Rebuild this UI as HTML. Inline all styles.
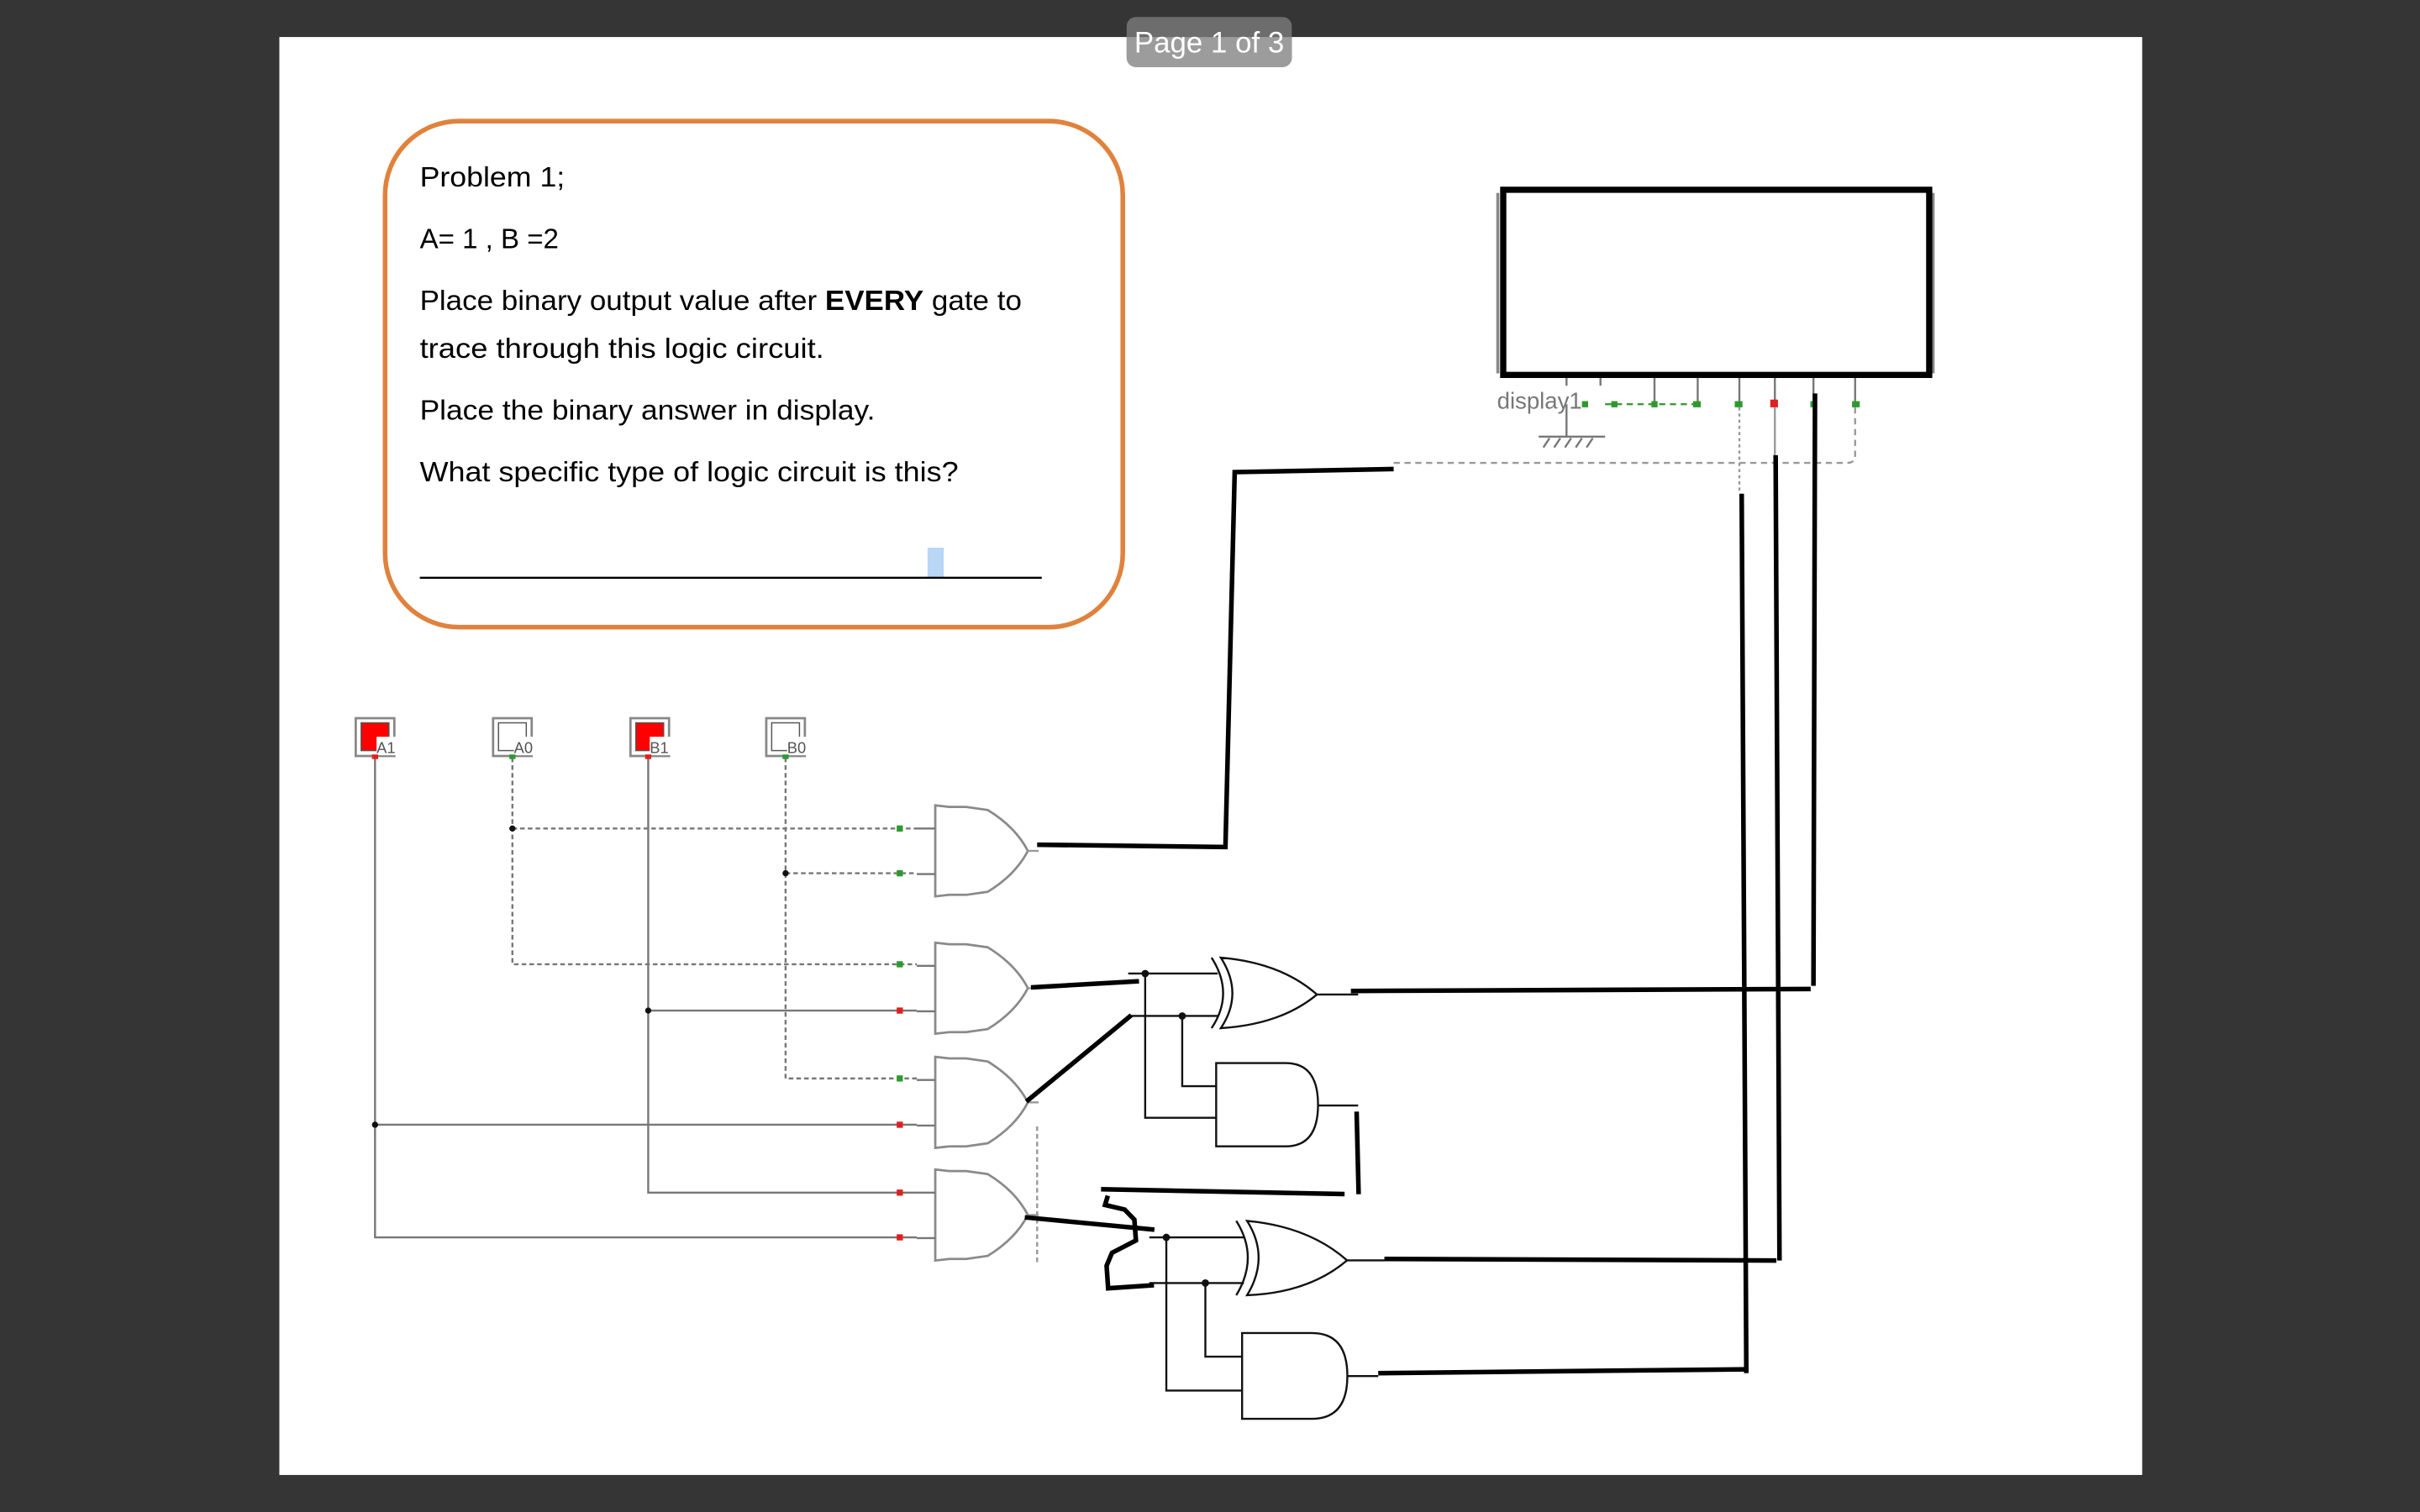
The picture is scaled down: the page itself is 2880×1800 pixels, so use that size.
<!DOCTYPE html>
<html><head><meta charset="utf-8"><style>
html,body{margin:0;padding:0;background:#353535;}
svg{display:block;}
</style></head><body>
<svg width="2880" height="1800" viewBox="0 0 1568 980" xmlns="http://www.w3.org/2000/svg">
<defs>
<g id="gate">
<path d="M0,0 L9,1 L20,1 L34,3 Q52,14 60,29.5 Q52,45 34,56 L20,58 L9,58 L0,59 Z" fill="#fff" stroke="#8a8a8a" stroke-width="1.5"/>
<line x1="-12" y1="15" x2="0" y2="15" stroke="#777" stroke-width="1.3"/>
<line x1="-12" y1="44.5" x2="0" y2="44.5" stroke="#777" stroke-width="1.3"/>
<line x1="60" y1="29.5" x2="67" y2="29.5" stroke="#999" stroke-width="1.3"/>
</g>
</defs>
<rect width="1568" height="980" fill="#353535"/>
<rect x="181" y="24" width="1207" height="932" fill="#fff"/>
<!-- page pill -->
<rect x="730" y="11" width="107" height="32.5" rx="6" fill="#6d6d6d"/>
<path d="M730,24 H837 V37.5 a6,6 0 0 1 -6,6 H736 a6,6 0 0 1 -6,-6 Z" fill="#9c9c9c"/>
<text x="783.5" y="34" text-anchor="middle" font-family="Liberation Sans, sans-serif" font-size="19" fill="#fff">Page 1 of 3</text>

<!-- problem box -->
<rect x="249.5" y="78.5" width="478" height="328" rx="48" fill="#fff" stroke="#e0823d" stroke-width="3"/>
<g font-family="Liberation Sans, sans-serif" font-size="18" fill="#000">
<text x="272" y="121" textLength="94" lengthAdjust="spacingAndGlyphs">Problem 1;</text>
<text x="272" y="161" textLength="90" lengthAdjust="spacingAndGlyphs">A= 1 , B =2</text>
<text x="272" y="201" textLength="390" lengthAdjust="spacingAndGlyphs">Place binary output value after <tspan font-weight="bold">EVERY</tspan> gate to</text>
<text x="272" y="232" textLength="262" lengthAdjust="spacingAndGlyphs">trace through this logic circuit.</text>
<text x="272" y="272" textLength="295" lengthAdjust="spacingAndGlyphs">Place the binary answer in display.</text>
<text x="272" y="312" textLength="349" lengthAdjust="spacingAndGlyphs">What specific type of logic circuit is this?</text>
</g>
<rect x="601" y="355" width="10.5" height="20" fill="#b9d6f7"/>
<line x1="272" y1="374.5" x2="675" y2="374.5" stroke="#000" stroke-width="1.3"/>

<!-- display -->
<line x1="970.5" y1="125" x2="970.5" y2="242" stroke="#888" stroke-width="2"/>
<line x1="1252.5" y1="125" x2="1252.5" y2="242" stroke="#888" stroke-width="2"/>
<rect x="974" y="123" width="276" height="120" fill="#fff" stroke="#000" stroke-width="4"/>
<g stroke="#777" stroke-width="1.3">
<line x1="1015" y1="245" x2="1015" y2="250"/><line x1="1037" y1="245" x2="1037" y2="250"/>
<line x1="1072" y1="245" x2="1072" y2="262"/><line x1="1100" y1="245" x2="1100" y2="262"/>
<line x1="1127" y1="245" x2="1127" y2="262"/><line x1="1150" y1="245" x2="1150" y2="262"/>
<line x1="1175" y1="245" x2="1175" y2="262"/><line x1="1202" y1="245" x2="1202" y2="262"/>
<line x1="1015" y1="262" x2="1015" y2="283"/>
<line x1="997" y1="283" x2="1040" y2="283"/>
<line x1="1000" y1="290" x2="1004" y2="284"/><line x1="1007" y1="290" x2="1011" y2="284"/><line x1="1014" y1="290" x2="1018" y2="284"/><line x1="1021" y1="290" x2="1025" y2="284"/><line x1="1028" y1="290" x2="1032" y2="284"/>
</g>
<text x="970" y="265" font-family="Liberation Sans, sans-serif" font-size="15" fill="#777">display1</text>
<line x1="1040" y1="262" x2="1100" y2="262" stroke="#3a9a3a" stroke-width="1.3" stroke-dasharray="4,3"/>
<g fill="#2e9a2e"><rect x="1025" y="260" width="4" height="4"/><rect x="1044" y="260" width="4" height="4"/><rect x="1070" y="260" width="4" height="4"/><rect x="1097" y="260" width="5" height="4"/><rect x="1124" y="260" width="5" height="4"/><rect x="1173" y="260" width="4" height="4"/><rect x="1200" y="260" width="5" height="4"/></g>
<rect x="1147" y="259" width="5" height="5" fill="#e02020"/>
<path d="M903,300 H1197 Q1202,300 1202,295 V264" fill="none" stroke="#999" stroke-width="1.3" stroke-dasharray="4,3"/>
<line x1="1127" y1="264" x2="1127" y2="318" stroke="#999" stroke-width="1.3" stroke-dasharray="2,2"/>
<line x1="1150" y1="264" x2="1150" y2="300" stroke="#999" stroke-width="1.3"/>

<!-- switches -->
<g font-family="Liberation Sans, sans-serif" font-size="10" fill="#555">
<rect x="230.5" y="465.5" width="25" height="24.5" fill="#fff" stroke="#888" stroke-width="1.5"/>
<rect x="234" y="468.5" width="18" height="18" fill="#f00" stroke="#555" stroke-width="0.8"/>
<rect x="244" y="477.5" width="14" height="12" fill="#fff"/><text x="244" y="488">A1</text>
<rect x="319.5" y="465.5" width="25" height="24.5" fill="#fff" stroke="#888" stroke-width="1.5"/>
<rect x="323" y="468.5" width="18" height="18" fill="#fff" stroke="#555" stroke-width="0.8"/>
<rect x="333" y="477.5" width="14" height="12" fill="#fff"/><text x="333" y="488">A0</text>
<rect x="408.5" y="465.5" width="25" height="24.5" fill="#fff" stroke="#888" stroke-width="1.5"/>
<rect x="412" y="468.5" width="18" height="18" fill="#f00" stroke="#555" stroke-width="0.8"/>
<rect x="421" y="477.5" width="14" height="12" fill="#fff"/><text x="421" y="488">B1</text>
<rect x="496.5" y="465.5" width="25" height="24.5" fill="#fff" stroke="#888" stroke-width="1.5"/>
<rect x="500" y="468.5" width="18" height="18" fill="#fff" stroke="#555" stroke-width="0.8"/>
<rect x="510" y="477.5" width="14" height="12" fill="#fff"/><text x="510" y="488">B0</text>
</g>

<!-- input wires -->
<g fill="none" stroke-width="1.3">
<path d="M243,491 V802 H594" stroke="#777"/>
<path d="M243,729 H594" stroke="#777"/>
<path d="M420,491 V773 H594" stroke="#777"/>
<path d="M420,655 H594" stroke="#777"/>
<path d="M332,491 V625 H594" stroke="#777" stroke-dasharray="3,2"/>
<path d="M332,537 H594" stroke="#777" stroke-dasharray="3,2"/>
<path d="M509,491 V699 H594" stroke="#777" stroke-dasharray="3,2"/>
<path d="M509,566 H594" stroke="#777" stroke-dasharray="3,2"/>
<line x1="672" y1="730" x2="672" y2="820" stroke="#999" stroke-dasharray="3,2"/>
</g>
<g fill="#111"><circle cx="243" cy="729" r="2"/><circle cx="420" cy="655" r="2"/><circle cx="332" cy="537" r="2"/><circle cx="509" cy="566" r="2"/></g>
<g fill="#2e9a2e"><rect x="581" y="535" width="4" height="4"/><rect x="581" y="564" width="4" height="4"/><rect x="581" y="623" width="4" height="4"/><rect x="581" y="697" width="4" height="4"/><rect x="241" y="489" width="4" height="3" fill="#e02020"/><rect x="330" y="489" width="4" height="3"/><rect x="418" y="489" width="4" height="3" fill="#e02020"/><rect x="507" y="489" width="4" height="3"/></g>
<g fill="#e02020"><rect x="581" y="653" width="4" height="4"/><rect x="581" y="727" width="4" height="4"/><rect x="581" y="771" width="4" height="4"/><rect x="581" y="800" width="4" height="4"/></g>

<use href="#gate" x="606" y="522"/>
<use href="#gate" x="606" y="611"/>
<use href="#gate" x="606" y="685"/>
<use href="#gate" x="606" y="758"/>

<!-- second stage (black) -->
<g fill="none" stroke="#111" stroke-width="1.3">
<path d="M731,631 H789"/>
<path d="M731,658.5 H789"/>
<path d="M742,631 V724.5 H788"/>
<path d="M766,658.5 V704 H788"/>
<path d="M785,620.7 Q800,644 785,666.4"/>
<path d="M791,620.7 Q806,644 791,666.4 Q830,664 853.3,644.6 Q830,624 791,620.7 Z" fill="#fff"/>
<line x1="853.3" y1="644.6" x2="880" y2="644.6"/>
<path d="M788,689 H833 Q854,689 854,716 Q854,743 833,743 H788 Z" fill="#fff"/>
<line x1="854" y1="716.5" x2="880" y2="716.5"/>

<path d="M744.7,802 H806"/>
<path d="M744.7,831.6 H806"/>
<path d="M755.7,802 V901.3 H805"/>
<path d="M781,831.6 V879.3 H805"/>
<path d="M801,791.3 Q816,815 801,839.5"/>
<path d="M808,791.3 Q823,815 808,839.5 Q848,838 872.8,816.9 Q848,795 808,791.3 Z" fill="#fff"/>
<line x1="872.8" y1="816.9" x2="897" y2="816.9"/>
<path d="M804.8,864 H850 Q873,864 873,891.8 Q873,919.6 850,919.6 H804.8 Z" fill="#fff"/>
<line x1="873" y1="891.9" x2="893" y2="891.9"/>
</g>
<g fill="#111"><circle cx="742" cy="631" r="2.4"/><circle cx="766" cy="658.5" r="2.4"/><circle cx="755.7" cy="802" r="2.4"/><circle cx="781" cy="831.6" r="2.4"/></g>

<!-- hand-drawn thick wires -->
<g fill="none" stroke="#000" stroke-width="3" stroke-linecap="butt">
<path d="M672,547.5 L794,549 L800,306 L903,304"/>
<line x1="668" y1="640" x2="738" y2="636"/>
<line x1="665" y1="714" x2="733" y2="658"/>
<line x1="664" y1="789" x2="748" y2="797"/>
<path d="M717.8,775 L716,781 L728.7,784 L735,790.5 L736,804 L720.5,812 L717,820.4 L718,835 L747.7,833"/>
<line x1="713.4" y1="770.8" x2="871.2" y2="773.9"/>
<line x1="879" y1="720.5" x2="880.3" y2="774"/>
<line x1="875.3" y1="642.3" x2="1173.2" y2="641"/>
<line x1="1176" y1="255" x2="1175" y2="639"/>
<line x1="897" y1="816" x2="1151" y2="817"/>
<line x1="1150.5" y1="295" x2="1153" y2="817"/>
<line x1="893" y1="890" x2="1132" y2="887.5"/>
<line x1="1128.5" y1="320" x2="1131.5" y2="890"/>
</g>
</svg>
</body></html>
